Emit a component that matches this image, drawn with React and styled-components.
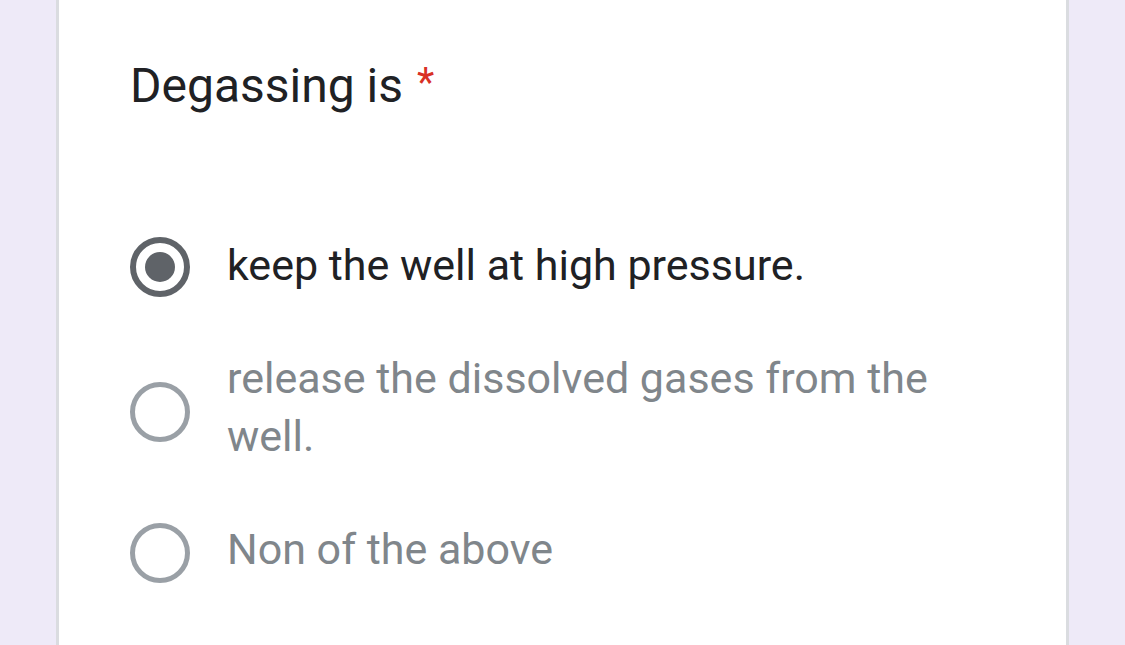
import React from 'react'
import styled, { createGlobalStyle } from 'styled-components'

const GlobalStyle = createGlobalStyle`
  html, body {
    margin: 0;
    padding: 0;
    background: #eeeaf8;
    font-family: Roboto, 'Noto Sans', sans-serif;
  }
`

const Page = styled.div`
  width: 1125px;
  height: 645px;
  overflow: hidden;
  background: #eeeaf8;
  padding-left: 56px;
  box-sizing: border-box;
`

const Card = styled.div`
  width: 1013px;
  height: 645px;
  box-sizing: border-box;
  background: #ffffff;
  border-left: 3px solid #dadce0;
  border-right: 3px solid #dadce0;
  padding: 58px 0 0 71px;
`

const Title = styled.div`
  font-size: 48px;
  line-height: 56px;
  color: #202124;
`

const Required = styled.span`
  color: #d93025;
  font-size: 40px;
  line-height: 0;
  margin-left: 14px;
  vertical-align: 6px;
`

const Options = styled.div`
  display: flex;
  flex-direction: column;
  gap: 54px;
  margin-top: 121px;
`

const Option = styled.label`
  display: flex;
  align-items: center;
  gap: 37px;
`

const Radio = styled.span`
  flex: none;
  width: 60px;
  height: 60px;
  box-sizing: border-box;
  border-radius: 50%;
  border: ${p => (p.checked ? '6px solid #5f6368' : '5px solid #9aa0a6')};
  display: flex;
  align-items: center;
  justify-content: center;
  margin-top: ${p => p.offset || 0}px;
  margin-bottom: ${p => -(p.offset || 0)}px;

  &::after {
    content: '';
    display: ${p => (p.checked ? 'block' : 'none')};
    width: 30px;
    height: 30px;
    border-radius: 50%;
    background: #5f6368;
  }
`

const OptionText = styled.span`
  font-size: 43px;
  line-height: 58px;
  color: ${p => (p.checked ? '#202124' : '#80868b')};
  max-width: 740px;
`

const options = [
  { text: 'keep the well at high pressure.', checked: true, offset: 2 },
  { text: 'release the dissolved gases from the well.', checked: false, offset: 5 },
  { text: 'Non of the above', checked: false, offset: 4 },
]

export default function App() {
  return (
    <Page>
      <GlobalStyle />
      <Card>
        <Title>
          Degassing is<Required>*</Required>
        </Title>
        <Options>
          {options.map((o, i) => (
            <Option key={i}>
              <Radio checked={o.checked} offset={o.offset} />
              <OptionText checked={o.checked}>{o.text}</OptionText>
            </Option>
          ))}
        </Options>
      </Card>
    </Page>
  )
}
